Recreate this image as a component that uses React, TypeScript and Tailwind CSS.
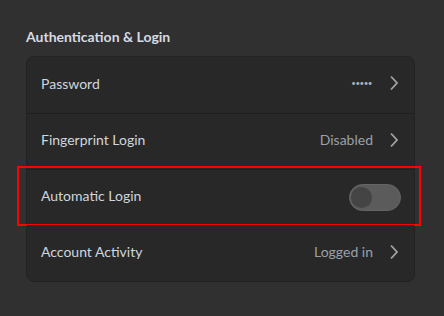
type Row = { label: string; value?: string; toggle?: boolean };

const rows: Row[] = [
  { label: "Password", value: "•••••" },
  { label: "Fingerprint Login", value: "Disabled" },
  { label: "Automatic Login", toggle: true },
  { label: "Account Activity", value: "Logged in" },
];

function Chevron() {
  return (
    <svg width="10" height="16" viewBox="0 0 10 16" className="text-[#a3a3a3]">
      <polyline points="2,1.5 8,8 2,14.5" fill="none" stroke="currentColor" strokeWidth="1.8" />
    </svg>
  );
}

export default function App() {
  return (
    <div
      className="w-[444px] h-[316px] bg-[#303030] px-[26px] pt-[28px] relative"
      style={{ fontFamily: "Lato, 'Open Sans', sans-serif" }}
    >
      <h2 className="text-[14px] font-bold text-[#d6dbe3] leading-[18px] mb-[10px]">
        Authentication &amp; Login
      </h2>

      <div className="w-[389px] bg-[#282828] border border-[#222222] rounded-[8px]">
        {rows.map((row, i) => (
          <div
            key={row.label}
            className={
              "relative flex items-center h-[56px] pl-[14px] pr-[15px] pb-[4px] " +
              (i > 0 ? "border-t border-[#1f1f1f]" : "")
            }
          >
            <span className="flex-1 text-[14px] text-[#cfd6df]">{row.label}</span>
            {row.toggle ? (
              <div className="w-[52px] h-[27px] rounded-full bg-[#5b5b5b] border border-[#656565] flex items-center pl-[1px] mt-[4px] mr-[-2px]">
                <div className="w-[21px] h-[21px] rounded-full bg-[#444444]" />
              </div>
            ) : (
              <>
                {row.value === "•••••" ? (
                  <span className="text-[8px] leading-none tracking-[-0.5px] text-[#a9b0bb] mr-[17px]">
                    {row.value}
                  </span>
                ) : (
                  <span className="text-[14px] text-[#9aa0a8] mr-[16px]">{row.value}</span>
                )}
                <Chevron />
              </>
            )}
            {row.toggle && (
              <div className="absolute left-[-10px] right-[-7px] top-[-4px] bottom-[-1px] border-2 border-[#ff0000] pointer-events-none" />
            )}
          </div>
        ))}
      </div>
    </div>
  );
}
